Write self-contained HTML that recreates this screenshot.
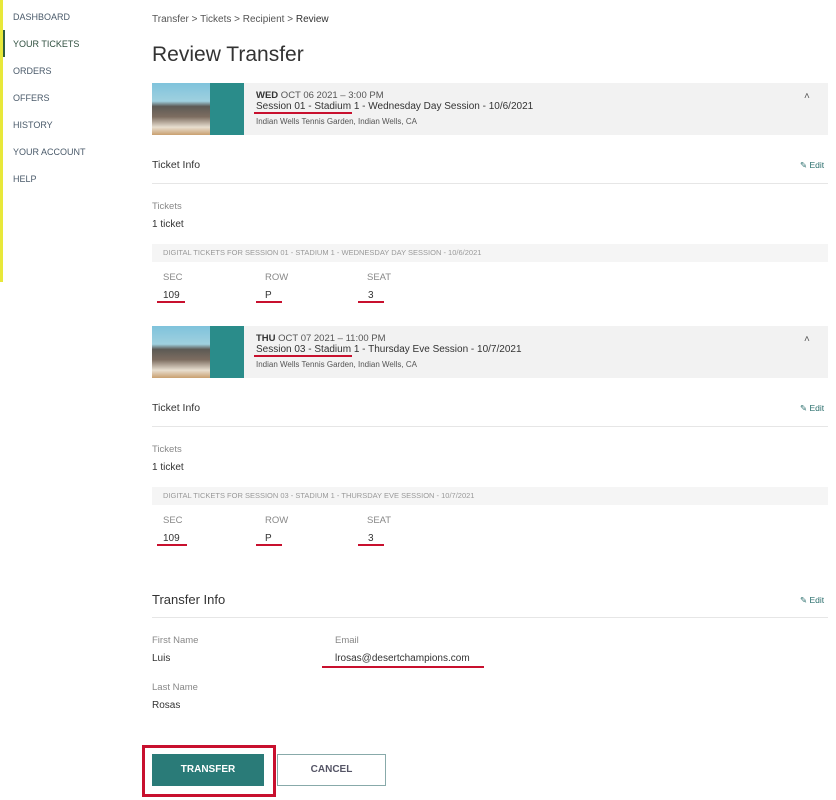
<!DOCTYPE html>
<html><head><style>
body{margin:0;width:836px;height:800px;background:#fff;font-family:"Liberation Sans",sans-serif;color:#333;position:relative;overflow:hidden}
.a{position:absolute;white-space:nowrap}
.nav{font-size:9px;color:#4a5a6a;left:13px}
.lbl{font-size:9.5px;color:#888}
.val{font-size:10px;color:#333}
.hr{position:absolute;left:152px;width:676px;height:1px;background:#e6e6e6}
.red{position:absolute;height:2px;background:#c8102e}
.card{position:absolute;left:152px;width:676px;height:52px;background:#f2f2f2}
.img{position:absolute;left:0;top:0;width:92px;height:52px;background:linear-gradient(#7fc3dc 0,#9fd0df 35%,#5d5a55 45%,#7d6d60 65%,#e8dfd0 85%,#c9a070 100%)}
.img:after{content:"";position:absolute;left:58px;top:0;width:34px;height:52px;background:#2a8c8a}
.edit{font-size:8.5px;color:#2a6e6c;left:800px}
.dig{position:absolute;left:152px;width:676px;height:18px;background:#f5f5f5;font-size:7.5px;color:#999;line-height:18px;text-indent:11px}
</style></head><body>
<div style="position:absolute;left:0;top:0;width:3px;height:282px;background:#e8e83a"></div>
<div style="position:absolute;left:3px;top:30px;width:2px;height:27px;background:#2f5f3f"></div>
<div class="a nav" style="top:12px">DASHBOARD</div>
<div class="a nav" style="top:39px;color:#2f4f3f">YOUR TICKETS</div>
<div class="a nav" style="top:66px">ORDERS</div>
<div class="a nav" style="top:93px">OFFERS</div>
<div class="a nav" style="top:120px">HISTORY</div>
<div class="a nav" style="top:147px">YOUR ACCOUNT</div>
<div class="a nav" style="top:174px">HELP</div>

<div class="a" style="left:152px;top:14px;font-size:10px;color:#555">Transfer &gt; Tickets &gt; Recipient &gt; <span style="color:#333">Review</span></div>
<div class="a" style="left:152px;top:43px;font-size:21px;color:#333">Review Transfer</div>

<div class="card" style="top:83px"><div class="img"></div>
<div class="a" style="left:104px;top:7px;font-size:9.5px;color:#555"><b style="color:#333">WED</b> OCT 06 2021 – 3:00 PM</div>
<div class="a" style="left:104px;top:18px;font-size:10px;color:#333">Session 01 - Stadium 1 - Wednesday Day Session - 10/6/2021</div>
<div class="a" style="left:104px;top:34px;font-size:8px;color:#555">Indian Wells Tennis Garden, Indian Wells, CA</div>
<div class="a" style="left:652px;top:8px;font-size:10px;color:#555">˄</div></div>
<div class="red" style="left:254px;top:112px;width:98px"></div>
<div class="a" style="left:152px;top:159px;font-size:10.5px">Ticket Info</div>
<div class="a edit" style="top:160px">✎ Edit</div>
<div class="hr" style="top:183px"></div>
<div class="a lbl" style="left:152px;top:201px">Tickets</div>
<div class="a val" style="left:152px;top:219px">1 ticket</div>
<div class="dig" style="top:244px">DIGITAL TICKETS FOR SESSION 01 - STADIUM 1 - WEDNESDAY DAY SESSION - 10/6/2021</div>
<div class="a lbl" style="left:163px;top:272px">SEC</div><div class="a lbl" style="left:265px;top:272px">ROW</div><div class="a lbl" style="left:367px;top:272px">SEAT</div>
<div class="a val" style="left:163px;top:290px">109</div><div class="a val" style="left:265px;top:290px">P</div><div class="a val" style="left:368px;top:290px">3</div>
<div class="red" style="left:157px;top:301px;width:28px"></div><div class="red" style="left:256px;top:301px;width:26px"></div><div class="red" style="left:358px;top:301px;width:26px"></div>

<div class="card" style="top:326px"><div class="img"></div>
<div class="a" style="left:104px;top:7px;font-size:9.5px;color:#555"><b style="color:#333">THU</b> OCT 07 2021 – 11:00 PM</div>
<div class="a" style="left:104px;top:18px;font-size:10px;color:#333">Session 03 - Stadium 1 - Thursday Eve Session - 10/7/2021</div>
<div class="a" style="left:104px;top:34px;font-size:8px;color:#555">Indian Wells Tennis Garden, Indian Wells, CA</div>
<div class="a" style="left:652px;top:8px;font-size:10px;color:#555">˄</div></div>
<div class="red" style="left:254px;top:355px;width:98px"></div>
<div class="a" style="left:152px;top:402px;font-size:10.5px">Ticket Info</div>
<div class="a edit" style="top:403px">✎ Edit</div>
<div class="hr" style="top:426px"></div>
<div class="a lbl" style="left:152px;top:444px">Tickets</div>
<div class="a val" style="left:152px;top:462px">1 ticket</div>
<div class="dig" style="top:487px">DIGITAL TICKETS FOR SESSION 03 - STADIUM 1 - THURSDAY EVE SESSION - 10/7/2021</div>
<div class="a lbl" style="left:163px;top:515px">SEC</div><div class="a lbl" style="left:265px;top:515px">ROW</div><div class="a lbl" style="left:367px;top:515px">SEAT</div>
<div class="a val" style="left:163px;top:533px">109</div><div class="a val" style="left:265px;top:533px">P</div><div class="a val" style="left:368px;top:533px">3</div>
<div class="red" style="left:157px;top:544px;width:30px"></div><div class="red" style="left:256px;top:544px;width:26px"></div><div class="red" style="left:358px;top:544px;width:26px"></div>

<div class="a" style="left:152px;top:592px;font-size:13px">Transfer Info</div>
<div class="a edit" style="top:595px">✎ Edit</div>
<div class="hr" style="top:617px"></div>
<div class="a lbl" style="left:152px;top:635px">First Name</div>
<div class="a val" style="left:152px;top:653px">Luis</div>
<div class="a lbl" style="left:335px;top:635px">Email</div>
<div class="a val" style="left:335px;top:653px">lrosas@desertchampions.com</div>
<div class="red" style="left:322px;top:666px;width:162px"></div>
<div class="a lbl" style="left:152px;top:682px">Last Name</div>
<div class="a val" style="left:152px;top:700px">Rosas</div>

<div style="position:absolute;left:152px;top:754px;width:112px;height:32px;background:#2a7b78;color:#fff;font-size:10px;font-weight:bold;text-align:center;line-height:32px">TRANSFER</div>
<div style="position:absolute;left:277px;top:754px;width:107px;height:30px;border:1px solid #8aa;color:#556;font-size:10px;font-weight:bold;text-align:center;line-height:30px">CANCEL</div>
<div style="position:absolute;left:142px;top:745px;width:128px;height:46px;border:3px solid #c8102e"></div>
</body></html>
